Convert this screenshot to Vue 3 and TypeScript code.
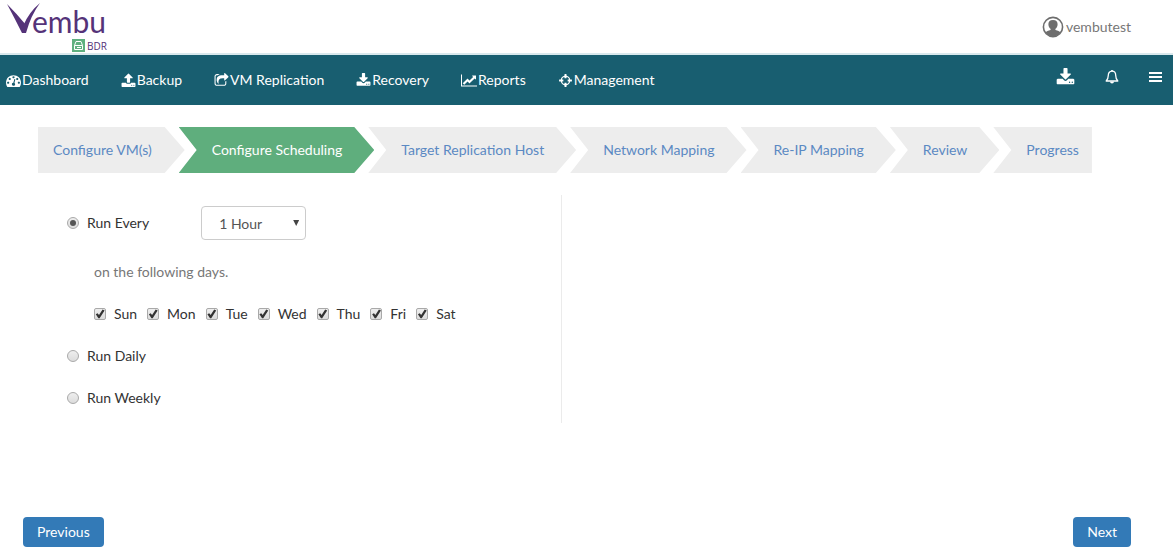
<script setup lang="ts">
import { ref } from 'vue'

interface NavItem {
  label: string
  box: string
  width: number
  path: string
}

const downloadPath =
  'M1344 1344q0-26-19-45t-45-19-45 19-19 45 19 45 45 19 45-19 19-45zm256 0q0-26-19-45t-45-19-45 19-19 45 19 45 45 19 45-19 19-45zm128-224v320q0 40-28 68t-68 28h-1472q-40 0-68-28t-28-68v-320q0-40 28-68t68-28h465l135 136q58 56 136 56t136-56l136-136h464q40 0 68 28t28 68zm-325-569q17 41-14 70l-448 448q-18 19-45 19t-45-19l-448-448q-31-29-14-70 17-39 59-39h256v-448q0-26 19-45t45-19h256q26 0 45 19t19 45v448h256q42 0 59 39z'

const navItems: NavItem[] = [
  {
    label: 'Dashboard',
    box: '0 0 1792 1792',
    width: 15,
    path: 'M384 1152q0-53-37.5-90.5t-90.5-37.5-90.5 37.5-37.5 90.5 37.5 90.5 90.5 37.5 90.5-37.5 37.5-90.5zm192-448q0-53-37.5-90.5t-90.5-37.5-90.5 37.5-37.5 90.5 37.5 90.5 90.5 37.5 90.5-37.5 37.5-90.5zm428 481l101-382q6-26-7.5-48.5t-38.5-29.5-48 6.5-30 39.5l-101 382q-60 5-107 43.5t-63 98.5q-20 77 20 146t117 89 146-20 89-117q16-60-6-117t-72-91zm660-33q0-53-37.5-90.5t-90.5-37.5-90.5 37.5-37.5 90.5 37.5 90.5 90.5 37.5 90.5-37.5 37.5-90.5zm-640-640q0-53-37.5-90.5t-90.5-37.5-90.5 37.5-37.5 90.5 37.5 90.5 90.5 37.5 90.5-37.5 37.5-90.5zm448 192q0-53-37.5-90.5t-90.5-37.5-90.5 37.5-37.5 90.5 37.5 90.5 90.5 37.5 90.5-37.5 37.5-90.5zm320 448q0 261-141 483-19 29-54 29h-1402q-35 0-54-29-141-221-141-483 0-182 71-348t191-286 286-191 348-71 348 71 286 191 191 286 71 348z',
  },
  {
    label: 'Backup',
    box: '0 0 1792 1792',
    width: 15,
    path: 'M1344 1472q0-26-19-45t-45-19-45 19-19 45 19 45 45 19 45-19 19-45zm256 0q0-26-19-45t-45-19-45 19-19 45 19 45 45 19 45-19 19-45zm128-224v320q0 40-28 68t-68 28h-1472q-40 0-68-28t-28-68v-320q0-40 28-68t68-28h427q21 56 70.5 92t110.5 36h256q61 0 110.5-36t70.5-92h427q40 0 68 28t28 68zm-325-648q-17 40-59 40h-256v448q0 26-19 45t-45 19h-256q-26 0-45-19t-19-45v-448h-256q-42 0-59-40-17-39 14-69l448-448q18-19 45-19t45 19l448 448q31 30 14 69z',
  },
  {
    label: 'VM Replication',
    box: '0 0 1792 1792',
    width: 15,
    path: 'M1472 989v259q0 119-84.5 203.5t-203.5 84.5h-832q-119 0-203.5-84.5t-84.5-203.5v-832q0-119 84.5-203.5t203.5-84.5h255q13 0 22.5 9.5t9.5 22.5q0 27-26 32-77 26-133 60-10 4-16 4h-112q-66 0-113 47t-47 113v832q0 66 47 113t113 47h832q66 0 113-47t47-113v-214q0-19 18-29 28-13 54-37 16-16 35-8 21 9 21 29zm237-496l-384 384q-18 19-45 19-12 0-25-5-39-17-39-59v-192h-160q-323 0-438 131-119 137-74 473 3 23-20 34-8 2-12 2-16 0-26-13-10-14-21-31t-39.5-68.5-49.5-99.5-38.5-114-17.5-122q0-49 3.5-91t14-90 28-88 47-81.5 68.5-74 94.5-61.5 124.5-48.5 159.5-30.5 196.5-11h160v-192q0-42 39-59 13-5 25-5 26 0 45 19l384 384q19 19 19 45t-19 45z',
  },
  { label: 'Recovery', box: '0 0 1792 1792', width: 15, path: downloadPath },
  {
    label: 'Reports',
    box: '0 0 2048 1792',
    width: 16,
    path: 'M2048 1536v128h-2048v-1536h128v1408h1920zm-128-1248v435q0 21-19.5 29.5t-35.5-7.5l-121-121-633 633q-10 10-23 10t-23-10l-233-233-416 416-192-192 585-585q10-10 23-10t23 10l233 233 464-464-121-121q-16-16-7.5-35.5t29.5-19.5h435q14 0 23 9t9 23z',
  },
  {
    label: 'Management',
    box: '0 0 1792 1792',
    width: 15,
    path: 'M1325 1024h-109q-26 0-45-19t-19-45v-128q0-26 19-45t45-19h109q-32-108-112.5-188.5t-188.5-112.5v109q0 26-19 45t-45 19h-128q-26 0-45-19t-19-45v-109q-108 32-188.5 112.5t-112.5 188.5h109q26 0 45 19t19 45v128q0 26-19 45t-45 19h-109q32 108 112.5 188.5t188.5 112.5v-109q0-26 19-45t45-19h128q26 0 45 19t19 45v109q108-32 188.5-112.5t112.5-188.5zm339-192v128q0 26-19 45t-45 19h-143q-37 161-154.5 278.5t-278.5 154.5v143q0 26-19 45t-45 19h-128q-26 0-45-19t-19-45v-143q-161-37-278.5-154.5t-154.5-278.5h-143q-26 0-45-19t-19-45v-128q0-26 19-45t45-19h143q37-161 154.5-278.5t278.5-154.5v-143q0-26 19-45t45-19h128q26 0 45 19t19 45v143q161 37 278.5 154.5t154.5 278.5h143q26 0 45 19t19 45z',
  },
]

const steps: string[] = [
  'Configure VM(s)',
  'Configure Scheduling',
  'Target Replication Host',
  'Network Mapping',
  'Re-IP Mapping',
  'Review',
  'Progress',
]
const activeStep = ref(1)

const days: string[] = ['Sun', 'Mon', 'Tue', 'Wed', 'Thu', 'Fri', 'Sat']
const chosenDays = ref<string[]>([...days])
const mode = ref<'every' | 'daily' | 'weekly'>('every')
const interval = ref('1 Hour')
</script>

<template>
  <div class="page">
    <header class="top">
      <a href="#" class="logo" aria-label="Vembu BDR">
        <svg width="112" height="53" viewBox="0 0 112 53">
          <path d="M7 4Q17 14 26 25L24 33H22Q15 19 7 4Z" fill="#553379" />
          <path d="M40 3Q31 15 26 33H22L23 26Q29 12 40 3Z" fill="#553379" />
          <text x="32" y="33" class="logo-name">embu</text>
          <rect x="72" y="39" width="13" height="13" fill="#5fb07f" />
          <path
            d="M74.500 45.500L76 41.500H81L82.500 45.500V49.500H74.500ZM74.500 45.500H82.500M77 47.500H81"
            fill="none"
            stroke="#fff"
            stroke-width="1"
          />
          <text x="87" y="50" class="logo-sub">BDR</text>
        </svg>
      </a>
      <a href="#" class="user">
        <svg width="22" height="22" viewBox="0 0 22 22">
          <circle cx="11" cy="11" r="9.600" fill="#fff" stroke="#6e6e6e" stroke-width="1.600" />
          <path
            d="M11 4C14.300 4 15.800 6 15.600 8.500C15.500 10.500 14.500 12.300 13.300 13L13.500 14C15.500 14.800 17.800 15.200 18.600 16.500Q15.500 20.600 11 20.600T3.400 16.500C4.200 15.200 6.500 14.800 8.500 14L8.700 13C7.500 12.300 6.500 10.500 6.400 8.500C6.200 6 7.700 4 11 4Z"
            fill="#6e6e6e"
          />
        </svg>
        <span>vembutest</span>
      </a>
    </header>

    <nav class="bar">
      <div class="links">
        <a v-for="item in navItems" :key="item.label" href="#" class="link">
          <svg :width="item.width" height="15" :viewBox="item.box"><path :d="item.path" /></svg>
          <span>{{ item.label }}</span>
        </a>
      </div>
      <div class="tools">
        <button type="button" aria-label="Downloads">
          <svg width="19" height="19" viewBox="0 0 1792 1792"><path :d="downloadPath" /></svg>
        </button>
        <button type="button" aria-label="Notifications">
          <svg width="14" height="16" viewBox="0 0 14 16">
            <path
              d="M7 2.200C4.300 2.200 3.300 4.300 3.300 6.300C3.300 9 2.600 10.500 1.200 12H12.800C11.400 10.500 10.700 9 10.700 6.300C10.700 4.300 9.700 2.200 7 2.200Z"
              fill="none"
              stroke="#fff"
              stroke-width="1.300"
              stroke-linejoin="round"
            />
            <path d="M6.200 1H7.800V2.500H6.200ZM5 12.500H9Q9 14.600 7 14.600T5 12.500Z" />
          </svg>
        </button>
        <button type="button" aria-label="Menu">
          <svg width="13" height="12" viewBox="0 0 13 12">
            <path d="M0 1H13V3H0ZM0 5H13V7H0ZM0 9H13V11H0Z" />
          </svg>
        </button>
      </div>
    </nav>

    <main class="content">
      <ol class="steps">
        <li v-for="(step, i) in steps" :key="step">
          <a href="#" :class="['step', { active: i === activeStep }]">{{ step }}</a>
        </li>
      </ol>

      <form class="schedule" @submit.prevent>
        <div class="row first">
          <label class="choice">
            <input v-model="mode" type="radio" name="mode" value="every" />
            <span>Run Every</span>
          </label>
          <span class="picker">
            <select v-model="interval" aria-label="Run every">
              <option>1 Hour</option>
              <option>2 Hours</option>
              <option>4 Hours</option>
            </select>
          </span>
        </div>
        <p class="hint">on the following days.</p>
        <div class="row days">
          <label v-for="day in days" :key="day" class="day">
            <input v-model="chosenDays" type="checkbox" :value="day" />
            <span>{{ day }}</span>
          </label>
        </div>
        <div class="row">
          <label class="choice">
            <input v-model="mode" type="radio" name="mode" value="daily" />
            <span>Run Daily</span>
          </label>
        </div>
        <div class="row">
          <label class="choice">
            <input v-model="mode" type="radio" name="mode" value="weekly" />
            <span>Run Weekly</span>
          </label>
        </div>
      </form>
    </main>

    <footer class="actions">
      <button type="button">Previous</button>
      <button type="button">Next</button>
    </footer>
  </div>
</template>

<style>
body {
  margin: 0;
  background: #fff;
}
</style>

<style scoped>
.page {
  display: flex;
  flex-direction: column;
  min-height: 100vh;
  box-sizing: border-box;
  font: 14px/20px Lato, sans-serif;
  color: #333;
}
a {
  color: inherit;
  text-decoration: none;
}
button {
  font: inherit;
  border: 0;
  cursor: pointer;
}
svg {
  display: block;
  flex: none;
}
.top {
  display: flex;
  justify-content: space-between;
  align-items: center;
  padding-right: 42px;
  border-bottom: 2px solid #d9e9ed;
}
.logo-name {
  font: 400 30px Lato, sans-serif;
  fill: #553379;
}
.logo-sub {
  font: 400 10px "Open Sans", sans-serif;
  fill: #553379;
}
.user {
  display: flex;
  align-items: center;
  gap: 2px;
  color: #777;
}
.bar {
  display: flex;
  justify-content: space-between;
  align-items: center;
  min-height: 50px;
  padding: 0 11px 0 6px;
  background: #185e70;
  color: #fff;
  box-sizing: border-box;
}
.bar svg {
  fill: #fff;
}
.links {
  display: flex;
  gap: 32px;
}
.link {
  display: flex;
  align-items: center;
  gap: 1px;
}
.tools {
  display: flex;
  align-items: center;
  gap: 30px;
  padding-bottom: 6px;
}
.tools button {
  padding: 0;
  background: none;
}
.content {
  flex: 1;
  padding: 22px 44px 24px 38px;
}
.steps {
  display: flex;
  margin: 0 0 22px;
  padding: 0;
  list-style: none;
}
.steps li + li {
  margin-left: -6px;
}
.step {
  display: block;
  padding: 13px 32px 13px 33px;
  background: #ededed;
  color: #5b89c3;
  white-space: nowrap;
  clip-path: polygon(0 0, calc(100% - 20px) 0, 100% 50%, calc(100% - 20px) 100%, 0 100%, 18px 50%);
}
.step.active {
  background: #5fae7d;
  color: #fff;
}
.steps li:first-child .step {
  padding-left: 15px;
  padding-right: 33px;
  clip-path: polygon(0 0, calc(100% - 20px) 0, 100% 50%, calc(100% - 20px) 100%, 0 100%);
}
.steps li:last-child .step {
  padding-right: 13px;
  clip-path: polygon(0 0, 100% 0, 100% 100%, 0 100%, 18px 50%);
}
.schedule {
  width: 48%;
  min-width: 440px;
  box-sizing: border-box;
  padding: 11px 0 4px 29px;
  border-right: 1px solid #ebebeb;
}
.row {
  display: flex;
  align-items: center;
  min-height: 42px;
}
.row.first {
  min-height: 34px;
  gap: 52px;
}
.choice {
  display: flex;
  align-items: center;
  gap: 8px;
}
.hint {
  margin: 22px 0 11px 27px;
  color: #777;
}
.days {
  gap: 10px;
  padding-left: 27px;
}
.day {
  display: flex;
  align-items: center;
  gap: 8px;
}
input {
  appearance: none;
  display: grid;
  place-items: center;
  width: 12px;
  height: 12px;
  margin: 0;
  box-sizing: border-box;
  border: 1px solid #a9a9a9;
  background: linear-gradient(#eee, #dcdcdc);
}
input[type="radio"] {
  border-radius: 50%;
}
input[type="checkbox"] {
  border-radius: 2px;
}
input[type="radio"]:checked::after {
  content: "";
  width: 6px;
  height: 6px;
  border-radius: 50%;
  background: #555;
}
input[type="checkbox"]:checked::after {
  content: "";
  width: 10px;
  height: 10px;
  background: #333;
  clip-path: polygon(8% 52%, 26% 42%, 40% 60%, 76% 6%, 96% 16%, 46% 92%, 34% 92%);
}
.picker {
  display: grid;
  align-items: center;
}
.picker select {
  grid-area: 1 / 1;
  appearance: none;
  width: 105px;
  height: 34px;
  padding: 2px 17px 0;
  border: 1px solid #ccc;
  border-radius: 4px;
  background: #fff;
  color: #555;
  font: inherit;
}
.picker::after {
  content: "";
  grid-area: 1 / 1;
  justify-self: end;
  width: 6px;
  height: 6px;
  margin-right: 7px;
  background: #444;
  clip-path: polygon(0 0, 100% 0, 50% 100%);
  pointer-events: none;
  z-index: 1;
}
.actions {
  display: flex;
  justify-content: space-between;
  padding: 0 42px 0 23px;
}
.actions button {
  padding: 5px 14px;
  border-radius: 4px;
  background: #337ab7;
  color: #fff;
}
</style>
